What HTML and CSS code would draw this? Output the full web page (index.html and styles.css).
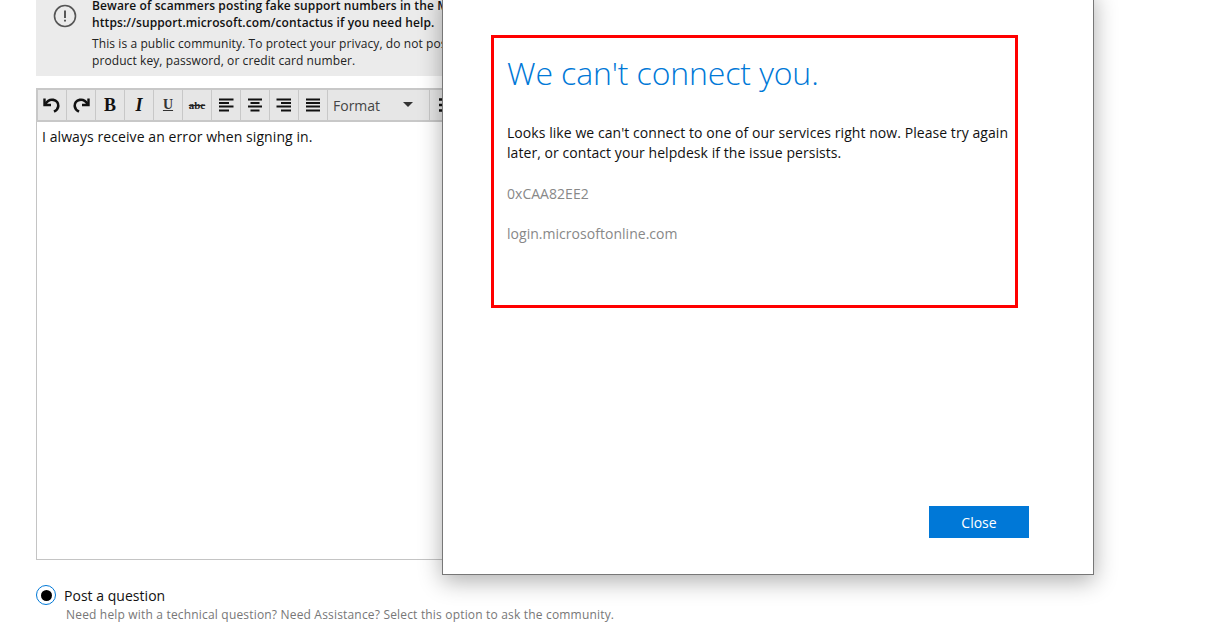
FILE: index.html
```html
<!DOCTYPE html>
<html lang="en">
<head>
<meta charset="utf-8">
<title>We can't connect you</title>
<link rel="stylesheet" href="styles.css">
</head>
<body>
<main class="page">
  <section class="notice">
    <svg class="notice-icon" width="24" height="24" viewBox="0 0 24 24"><circle cx="12" cy="12" r="10.500" fill="none" stroke="#555" stroke-width="1.600"/><path d="M12 6.500v7.500" stroke="#333" stroke-width="1.600"/><path d="M12 15.800v1.800" stroke="#333" stroke-width="1.600"/></svg>
    <div class="notice-text">
      <p class="notice-strong">Beware of scammers posting fake support numbers in the Microsoft Community. Please visit<br>https://support.microsoft.com/contactus if you need help.</p>
      <p class="notice-small">This is a public community. To protect your privacy, do not post any personal information such as your email address, phone number,<br>product key, password, or credit card number.</p>
    </div>
  </section>
  <section class="editor">
    <div class="toolbar">
      <button class="tool"><svg width="18" height="16" viewBox="0 0 18 16"><path d="M1.500 1.500v6.500h6.500" fill="none" stroke="#111" stroke-width="2.400"/><path d="M2.500 7C4.500 3.500 7.500 2.400 10.300 2.900c3.300.6 5.200 3.300 5 6.100-.2 2.400-1.700 4.400-4.300 5.700" fill="none" stroke="#111" stroke-width="2.600"/></svg></button>
      <button class="tool"><svg width="18" height="16" viewBox="0 0 18 16"><path d="M16.500 1.500v6.500h-6.500" fill="none" stroke="#111" stroke-width="2.400"/><path d="M15.500 7C13.500 3.500 10.500 2.400 7.700 2.900c-3.300.6-5.200 3.300-5 6.100.2 2.400 1.700 4.400 4.300 5.700" fill="none" stroke="#111" stroke-width="2.600"/></svg></button>
      <button class="tool tool-b">B</button>
      <button class="tool tool-i">I</button>
      <button class="tool tool-u">U</button>
      <button class="tool tool-s">abc</button>
      <button class="tool"><svg width="16" height="14" viewBox="0 0 16 14"><path d="M1 1.500h14.500M1 5h10M1 8.500h14.500M1 12.500h10" stroke="#111" stroke-width="2.200"/></svg></button>
      <button class="tool"><svg width="16" height="14" viewBox="0 0 16 14"><path d="M1 1.500h14M3.500 5h9M1 8.500h14M3.500 12.500h9" stroke="#111" stroke-width="2.200"/></svg></button>
      <button class="tool"><svg width="16" height="14" viewBox="0 0 16 14"><path d="M.500 1.500h14.500M5 5h10M.500 8.500h14.500M5 12.500h10" stroke="#111" stroke-width="2.200"/></svg></button>
      <button class="tool"><svg width="16" height="14" viewBox="0 0 16 14"><path d="M1 1.500h14M1 5h14M1 8.500h14M1 12.500h14" stroke="#111" stroke-width="2.200"/></svg></button>
      <div class="format"><span>Format</span><i class="caret"></i></div>
      <button class="tool tool-list"><svg width="16" height="14" viewBox="0 0 16 14"><path d="M1 1.500h3M1 7h3M1 12.500h3M6 1.500h9M6 7h9M6 12.500h9" stroke="#111" stroke-width="2.500"/></svg></button>
    </div>
    <div class="editor-body">I always receive an error when signing in.</div>
  </section>
  <section class="post-option">
    <span class="radio"><span class="radio-dot"></span></span>
    <div class="post-labels">
      <div class="post-title">Post a question</div>
      <div class="post-help">Need help with a technical question? Need Assistance? Select this option to ask the community.</div>
    </div>
  </section>
</main>
<div class="dialog" role="dialog">
  <div class="error-box">
    <h1>We can't connect you.</h1>
    <p class="message">Looks like we can't connect to one of our services right now. Please try again later, or contact your helpdesk if the issue persists.</p>
    <p class="detail">0xCAA82EE2</p>
    <p class="detail">login.microsoftonline.com</p>
  </div>
  <button class="close">Close</button>
</div>
</body>
</html>
```
FILE: styles.css
```css
* { box-sizing: border-box; }
html, body { margin: 0; height: 632px; overflow: hidden; background: #fff; }
body { font-family: "Open Sans", "Noto Sans", sans-serif; color: #111; position: relative; }
p, h1 { margin: 0; }

.page { padding-left: 36px; width: 1100px; }

.notice { height: 76px; width: 1000px; background: #ebebeb; display: flex; padding: 0 0 0 17px; }
.notice-icon { margin: 4px 15px 0 0; flex: none; }
.notice-text { white-space: nowrap; }
.notice-strong { font-size: 12px; font-weight: 600; line-height: 17px; margin-top: -3px; letter-spacing: .11px; }
.notice-small { font-size: 12px; line-height: 17px; margin-top: 4px; color: #222; letter-spacing: .09px; }

.editor { margin-top: 12px; width: 900px; height: 472px; border: 1px solid #c4c4c4; border-top: 0; }
.toolbar { height: 34px; margin-left: -1px; background: #e6e6e6; border: 2px solid #c8c8c8; display: flex; }
.tool { width: 29px; height: 30px; padding: 0; border: 0; border-right: 1px solid #c8c8c8; background: #e6e6e6; display: flex; align-items: center; justify-content: center; color: #111; font-family: "Liberation Serif", serif; }
.tool-b { font-size: 18px; font-weight: 700; }
.tool-i { font-size: 18px; font-style: italic; font-weight: 700; }
.tool-u { font-size: 14px; text-decoration: underline; font-weight: 700; color: #333; }
.tool-s { font-size: 11px; text-decoration: line-through; font-weight: 700; color: #222; }
.tool-list { padding-left: 3px; }
.format { width: 102px; height: 30px; border-right: 1px solid #c8c8c8; display: flex; align-items: center; justify-content: space-between; padding: 0 16px 0 5px; font-size: 14px; color: #444; }
.caret { width: 0; height: 0; margin-top: -2px; border: 5px solid transparent; border-top: 5px solid #333; border-bottom: 0; }
.editor-body { padding: 5px; font-size: 14px; line-height: 19px; letter-spacing: .08px; }

.post-option { display: flex; margin-top: 25px; }
.radio { width: 20px; height: 20px; border: 1.500px solid #0078d7; border-radius: 50%; display: flex; align-items: center; justify-content: center; flex: none; }
.radio-dot { width: 11px; height: 11px; border-radius: 50%; background: #000; }
.post-labels { margin-left: 8px; padding-top: 1px; }
.post-title { font-size: 14px; line-height: 20px; letter-spacing: .03px; }
.post-help { font-size: 12px; line-height: 16px; margin-top: 1px; color: #777; margin-left: 2px; letter-spacing: .18px; white-space: nowrap; }

.dialog { position: absolute; left: 442px; top: -10px; width: 652px; height: 585px; background: #fff; border: 1px solid #777; box-shadow: 0 6px 22px rgba(0,0,0,.32); }
.error-box { position: absolute; left: 48px; top: 44px; width: 527px; height: 273px; border: 3px solid #f00; padding: 13px 6px 0 13px; }
h1 { font-size: 32px; font-weight: 300; color: #0078d7; line-height: 44px; letter-spacing: -.12px; }
.message { font-size: 14px; line-height: 20px; margin-top: 28px; margin-bottom: 21px; color: #111; letter-spacing: .06px; }
.detail { font-size: 14px; line-height: 20px; margin-bottom: 20px; color: #888; letter-spacing: .03px; }
.close { position: absolute; left: 486px; top: 515px; width: 100px; height: 32px; background: #0078d7; color: #fff; border: 0; font: 14px "Open Sans", sans-serif; }
```
